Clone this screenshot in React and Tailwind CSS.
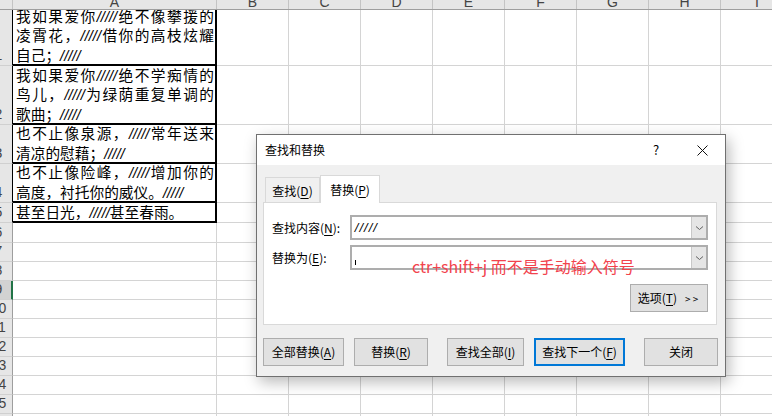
import React from "react";
import clsx from "clsx";

// poem rows in column A, each with its own row height
const poem = [
  { h: "h-[56px]", lines: ["我如果爱你/////绝不像攀援的", "凌霄花，/////借你的高枝炫耀", "自己；/////"] },
  { h: "h-[59px]", lines: ["我如果爱你/////绝不学痴情的", "鸟儿，/////为绿荫重复单调的", "歌曲；/////"] },
  { h: "h-[39px]", lines: ["也不止像泉源，/////常年送来", "清凉的慰藉；/////"] },
  { h: "h-[39px]", lines: ["也不止像险峰，/////增加你的", "高度，衬托你的威仪。/////"] },
  { h: "h-[20px]", lines: ["甚至日光，/////甚至春雨。"] },
];

const emptyRows = [
  { n: 6, h: "h-[20px]" },
  { n: 7, h: "h-[19px]" },
  { n: 8, h: "h-[19px]" },
  { n: 9, h: "h-[19px]", active: true },
  { n: 10, h: "h-[19px]" },
  { n: 11, h: "h-[19px]" },
  { n: 12, h: "h-[19px]" },
  { n: 13, h: "h-[19px]" },
  { n: 14, h: "h-[19px]" },
  { n: 15, h: "h-[19px]" },
  { n: 16, h: "h-[19px]" },
];

const cols = ["B", "C", "D", "E", "F", "G", "H"];

const cjk = "font-['Noto_Sans_CJK_SC',sans-serif]";

// the slash runs are narrow latin glyphs, so give them a latin face
function PoemLine({ text }) {
  const parts = text.split("/////");
  return parts.map((part, i) => (
    <React.Fragment key={i}>
      {part}
      {i < parts.length - 1 && (
        <span className="font-['Liberation_Sans',sans-serif] italic leading-none">/////</span>
      )}
    </React.Fragment>
  ));
}

function RowHeader({ n, active, bordered }) {
  return (
    <div
      className={clsx(
        "w-[13px] shrink-0 overflow-hidden flex items-end border-b border-b-[#d0d0d0] pb-[1px]",
        active ? "bg-[#d2d2d2] border-r-2 border-r-[#217346]" : "bg-[#e6e6e6] border-r",
        !active && (bordered ? "border-r-black" : "border-r-[#9e9e9e]")
      )}
    >
      <span className="ml-[-15px] w-[27px] shrink-0 text-center text-[14px] leading-[17px] text-[#444] font-['Liberation_Sans',sans-serif]">
        {n}
      </span>
    </div>
  );
}

function BlankCells() {
  return (
    <>
      {cols.map((c) => (
        <div key={c} className="w-[72px] shrink-0 border-r border-b border-[#d4d4d4]" />
      ))}
      <div className="flex-1 border-b border-[#d4d4d4]" />
    </>
  );
}

function PoemRow({ n, h, lines }) {
  return (
    <div className={clsx("flex", h)}>
      <RowHeader n={n} bordered />
      <div
        className={clsx(
          "w-[204px] shrink-0 overflow-hidden flex flex-col justify-end border-r-2 border-b-2 border-black pl-[3px] pr-[1px] text-[14.7px] leading-[19.5px] text-black",
          cjk
        )}
      >
        {lines.map((line, i) => (
          <div
            key={i}
            className={clsx(
              "h-[19.5px] shrink-0 whitespace-nowrap",
              i < lines.length - 1 ? "text-justify [text-align-last:justify]" : "text-left"
            )}
          >
            <PoemLine text={line} />
          </div>
        ))}
      </div>
      <BlankCells />
    </div>
  );
}

function EmptyRow({ n, h, active }) {
  return (
    <div className={clsx("flex", h)}>
      <RowHeader n={n} active={active} />
      <div className="w-[204px] shrink-0 border-r border-b border-[#d4d4d4]" />
      <BlankCells />
    </div>
  );
}

function Key({ children }) {
  return <span className="underline decoration-1 underline-offset-[2px]">{children}</span>;
}

function Chevron() {
  return (
    <svg width="9" height="6" viewBox="0 0 9 6" fill="none">
      <path d="M1 1.5 L4.5 4.5 L8 1.5" stroke="#606060" strokeWidth="1" />
    </svg>
  );
}

function ComboBox({ children }) {
  return (
    <div className="w-[359px] h-[25px] flex border-2 border-[#adadad] bg-white">
      <div className="flex-1 flex items-center pl-[3px]">{children}</div>
      <div className="w-[15px] flex items-center justify-center bg-[#e5e5e5] border-l border-[#c8c8c8]">
        <Chevron />
      </div>
    </div>
  );
}

function Button({ w, primary, children }) {
  return (
    <button
      className={clsx(
        "h-[28px] shrink-0 bg-[#e1e1e1] text-[12px] text-black flex items-center justify-center",
        primary ? "border-2 border-[#0078d7]" : "border border-[#adadad]",
        w
      )}
    >
      {children}
    </button>
  );
}

function FindReplaceDialog() {
  return (
    <div
      className={clsx(
        "absolute left-[256px] top-[134px] w-[470px] h-[243px] border border-[#707070] bg-[#f0f0f0] shadow-[3px_5px_14px_rgba(0,0,0,0.28)] text-[12px] text-black",
        cjk
      )}
    >
      {/* title bar */}
      <div className="h-[30px] bg-white flex items-center">
        <span className="pl-[8px] leading-none">查找和替换</span>
        <div className="ml-auto flex h-full">
          <div className="w-[46px] flex items-center justify-center text-[13px]">?</div>
          <div className="w-[46px] flex items-center justify-center">
            <svg width="11" height="11" viewBox="0 0 11 11">
              <path d="M0.5 0.5 L10.5 10.5 M10.5 0.5 L0.5 10.5" stroke="#111" strokeWidth="1" />
            </svg>
          </div>
        </div>
      </div>

      {/* tabs */}
      <div className="flex items-end pl-[8px] mt-[9px] h-[28px]">
        <div className="w-[55px] h-[25px] border border-b-0 border-[#d9d9d9] flex items-center justify-center pt-[2px]">
          查找(<Key>D</Key>)
        </div>
        <div className="relative z-10 w-[60px] h-[28px] mb-[-1px] bg-white border border-b-0 border-[#d9d9d9] flex items-center justify-center">
          替换(<Key>P</Key>)
        </div>
      </div>

      {/* replace panel */}
      <div className="ml-[6px] w-[454px] h-[123px] bg-white border border-[#d9d9d9] flex flex-col pt-[12px] px-[8px]">
        <div className="flex items-center">
          <span className="w-[78px]">
            查找内容(<Key>N</Key>):
          </span>
          <ComboBox>
            <span className="font-['Liberation_Sans',sans-serif] italic text-[13px] tracking-[1px]">/////</span>
          </ComboBox>
        </div>
        <div className="flex items-center mt-[5px]">
          <span className="w-[78px]">
            替换为(<Key>E</Key>):
          </span>
          <ComboBox>
            <span className="inline-block w-px h-[5px] bg-black mt-[10px]" />
          </ComboBox>
        </div>
        <div className="flex justify-end mt-[14px]">
          <Button w="w-[78px]">
            选项(<Key>T</Key>)<span className="ml-[8px] text-[10px] tracking-[2px]">&gt;&gt;</span>
          </Button>
        </div>
      </div>

      {/* bottom buttons */}
      <div className="flex mt-[13px] ml-[6px]">
        <Button w="w-[81px]">
          全部替换(<Key>A</Key>)
        </Button>
        <div className="w-[10px] shrink-0" />
        <Button w="w-[74px]">
          替换(<Key>R</Key>)
        </Button>
        <div className="w-[19px] shrink-0" />
        <Button w="w-[77px]">
          查找全部(<Key>I</Key>)
        </Button>
        <div className="w-[10px] shrink-0" />
        <Button w="w-[91px]" primary>
          查找下一个(<Key>F</Key>)
        </Button>
        <div className="w-[19px] shrink-0" />
        <Button w="w-[74px]">关闭</Button>
      </div>

      {/* red note written over the dialog */}
      <div className="absolute left-[155px] top-[122px] text-[16px] leading-[18px] text-[#f2434d] whitespace-nowrap">
        ctr+shift+j 而不是手动输入符号
      </div>
    </div>
  );
}

export default function App() {
  return (
    <div className="relative w-[772px] h-[416px] overflow-hidden bg-white">
      {/* column headers */}
      <div className="flex h-[10px] border-b border-[#9e9e9e] bg-[#e6e6e6] overflow-hidden font-['Liberation_Sans',sans-serif] text-[14px] text-[#444]">
        <div className="w-[13px] shrink-0 border-r border-[#c4c4c4]" />
        <div className="w-[204px] shrink-0 border-r border-[#c4c4c4] text-center leading-[20px] mt-[-8px]">A</div>
        {cols.map((c) => (
          <div key={c} className="w-[72px] shrink-0 border-r border-[#c4c4c4] text-center leading-[20px] mt-[-8px]">
            {c}
          </div>
        ))}
        <div className="w-[72px] shrink-0 text-center leading-[20px] mt-[-8px]">I</div>
      </div>

      {poem.map((row, i) => (
        <PoemRow key={i} n={i + 1} h={row.h} lines={row.lines} />
      ))}
      {emptyRows.map((row) => (
        <EmptyRow key={row.n} {...row} />
      ))}

      <FindReplaceDialog />
    </div>
  );
}
